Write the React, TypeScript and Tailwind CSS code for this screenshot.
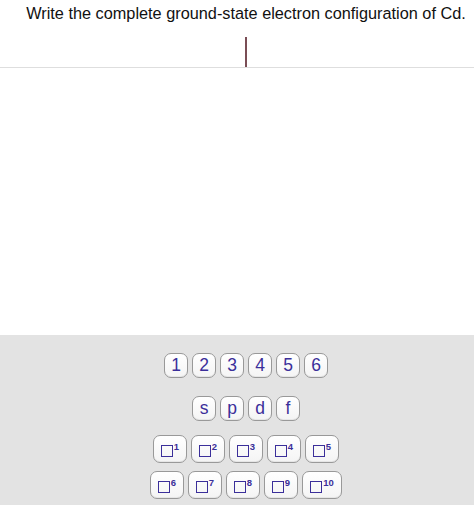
import React from 'react';

const numbers = ['1', '2', '3', '4', '5', '6'];
const orbitals = ['s', 'p', 'd', 'f'];
const powersTop = ['1', '2', '3', '4', '5'];
const powersBottom = ['6', '7', '8', '9', '10'];

const keyBase =
  'flex items-center justify-center rounded-[7px] border border-[#999999] bg-gradient-to-b from-white to-[#f4f4f4] text-[#3b2f9a] shadow-[inset_0_-1px_0_#e6e6e6]';

const Key: React.FC<{ label: string }> = ({ label }) => (
  <button className={`${keyBase} h-[25px] w-[24px] text-[17.5px] leading-none`}>{label}</button>
);

// empty box with a superscript, for the exponent keys
const PowerKey: React.FC<{ exp: string; wide?: boolean }> = ({ exp, wide }) => (
  <button className={`${keyBase} h-[28px] ${wide ? 'w-[40px]' : 'w-[34px]'}`}>
    <span className="flex items-start">
      <span className="mt-[3px] block h-[12px] w-[12px] border-[1.5px] border-[#3b2f9a]" />
      <span className="ml-[1px] text-[9.5px] font-bold leading-none">{exp}</span>
    </span>
  </button>
);

export default function App() {
  return (
    <div
      className="flex h-[505px] w-[474px] flex-col overflow-hidden bg-white"
      style={{ fontFamily: '"Liberation Sans", Arial, sans-serif' }}
    >
      {/* Question */}
      <div className="flex justify-center whitespace-nowrap pl-[18px] pt-[3px] text-[16.3px] leading-[20px] text-[#111111]">
        Write the complete ground-state electron configuration of Cd.
      </div>

      {/* Answer input */}
      <div className="flex h-[45px] items-end justify-center border-b border-[#dedede] pl-[18px]">
        <div className="h-[30px] w-[1.5px] bg-[#7a4d55]" />
      </div>

      <div className="flex-1" />

      {/* Keypad */}
      <div className="flex h-[170px] flex-col items-center bg-[#e3e3e3] pl-[18px] pt-[18px]">
        <div className="flex gap-[4px]">
          {numbers.map((n) => (
            <Key key={n} label={n} />
          ))}
        </div>
        <div className="mt-[18px] flex gap-[4px]">
          {orbitals.map((o) => (
            <Key key={o} label={o} />
          ))}
        </div>
        <div className="mt-[14px] flex gap-[4px]">
          {powersTop.map((p) => (
            <PowerKey key={p} exp={p} />
          ))}
        </div>
        <div className="mt-[8px] flex gap-[4px]">
          {powersBottom.map((p) => (
            <PowerKey key={p} exp={p} wide={p === '10'} />
          ))}
        </div>
      </div>
    </div>
  );
}
